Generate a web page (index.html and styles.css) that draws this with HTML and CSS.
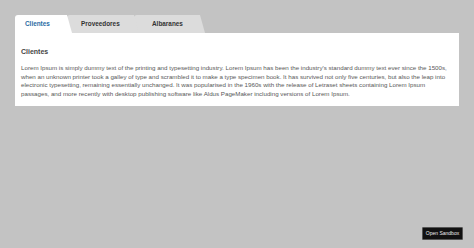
FILE: index.html
```html
<!DOCTYPE html>
<html>
<head>
<meta charset="utf-8">
<link rel="stylesheet" href="styles.css">
</head>
<body>
<div class="page">
  <div class="tabs">
    <div class="tab tab-1 active">Clientes</div>
    <div class="tab tab-2">Proveedores</div>
    <div class="tab tab-3">Albaranes</div>
  </div>
  <div class="panel">
    <h3 class="panel-title">Clientes</h3>
    <p class="panel-text">Lorem Ipsum is simply dummy text of the printing and typesetting industry. Lorem Ipsum has been the industry's standard dummy text ever since the 1500s, when an unknown printer took a galley of type and scrambled it to make a type specimen book. It has survived not only five centuries, but also the leap into electronic typesetting, remaining essentially unchanged. It was popularised in the 1960s with the release of Letraset sheets containing Lorem Ipsum passages, and more recently with desktop publishing software like Aldus PageMaker including versions of Lorem Ipsum.</p>
  </div>
</div>
<button class="sandbox-btn">Open Sandbox</button>
</body>
</html>
```
FILE: styles.css
```css
html, body {
  margin: 0;
  padding: 0;
  height: 100%;
  background: #c3c3c3;
  font-family: "Liberation Sans", Arial, sans-serif;
}
.page {
  padding: 15px 15px 0 15px;
}
.tabs {
  display: flex;
  height: 18px;
}
.tab {
  position: relative;
  height: 18px;
  line-height: 18px;
  font-size: 6.4px;
  font-weight: bold;
  color: #333;
  background: #dcdcdc;
  clip-path: polygon(0 0, calc(100% - 5px) 0, 100% 100%, 0 100%);
  border-top-left-radius: 3px;
  margin-right: -5px;
  box-sizing: border-box;
}
.tab-1 { width: 57px; padding-left: 10px; z-index: 3; }
.tab-2 { width: 72px; padding-left: 14px; z-index: 2; }
.tab-3 { width: 71px; padding-left: 18px; z-index: 1; }
.tab.active {
  background: #fff;
  color: #2a6ba3;
}
.panel {
  background: #fff;
  padding: 14px 6px 8px 6px;
}
.panel-title {
  margin: 0 0 8px 0;
  font-size: 7px;
  line-height: 9px;
  font-weight: bold;
  color: #444;
}
.panel-text {
  margin: 0;
  font-size: 6.2px;
  line-height: 8.5px;
  color: #585858;
}
.sandbox-btn {
  position: fixed;
  right: 11px;
  bottom: 8px;
  width: 41px;
  height: 13px;
  padding: 0;
  background: #111;
  color: #eee;
  border: 1px solid #555;
  border-radius: 1px;
  font-family: "Liberation Sans", Arial, sans-serif;
  font-size: 5px;
  line-height: 11px;
}
```
